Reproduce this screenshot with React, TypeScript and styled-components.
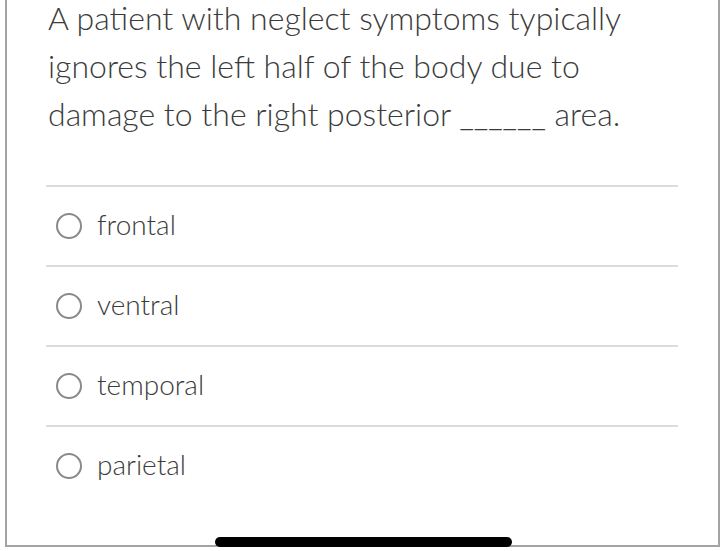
import React from "react";
import styled, { createGlobalStyle } from "styled-components";

const GlobalStyle = createGlobalStyle`
  html, body {
    margin: 0;
    padding: 0;
    background: #fff;
  }
  body {
    font-family: Lato, "Open Sans", sans-serif;
  }
`;

const options = ["frontal", "ventral", "temporal", "parietal"];

const Frame = styled.div`
  box-sizing: border-box;
  margin-left: 5px;
  width: 715px;
  height: 547px;
  border: 2px solid #a4a4a4;
  border-top: none;
  background: #fff;
  position: relative;
  display: flex;
  flex-direction: column;
  padding: 0 40px 0 39px;
`;

const Question = styled.p`
  margin: 0;
  padding-left: 2px;
  width: 610px;
  font-size: 32px;
  line-height: 48px;
  font-weight: 300;
  color: #3b3b3b;
  margin-top: -6px;
`;

const OptionList = styled.div`
  margin-top: 47px;
  display: flex;
  flex-direction: column;
`;

const OptionRow = styled.label`
  box-sizing: border-box;
  display: flex;
  align-items: center;
  gap: 15px;
  height: 80px;
  padding: 0 0 4px 10px;
  border-top: 2px solid #dcdcdc;
  font-size: 28px;
  font-weight: 300;
  color: #3b3b3b;
  cursor: pointer;
`;

const Radio = styled.span`
  box-sizing: border-box;
  width: 26px;
  height: 26px;
  border-radius: 50%;
  border: 2.5px solid #8a8a8a;
  flex-shrink: 0;
  margin-top: 4px;
`;

const HomeBar = styled.div`
  position: absolute;
  left: 208px;
  bottom: -2px;
  width: 297px;
  height: 10px;
  border-radius: 5px;
  background: #000;
`;

export default function App() {
  return (
    <>
      <GlobalStyle />
      <Frame>
        <Question>
          A patient with neglect symptoms typically ignores the left half of the
          body due to damage to the right posterior ______ area.
        </Question>
        <OptionList>
          {options.map((o) => (
            <OptionRow key={o}>
              <Radio />
              {o}
            </OptionRow>
          ))}
        </OptionList>
        <HomeBar />
      </Frame>
    </>
  );
}
